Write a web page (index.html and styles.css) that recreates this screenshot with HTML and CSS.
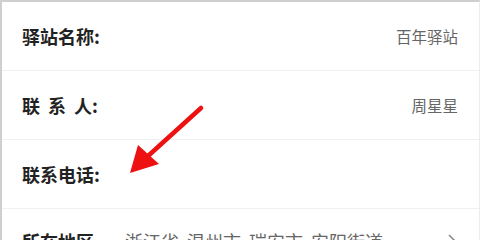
FILE: index.html
```
<!DOCTYPE html>
<html>
<head>
<meta charset="utf-8">
<link rel="stylesheet" href="styles.css">
</head>
<body>
<div class="page">
  <div class="row"><span class="label">驿站名称:</span><span class="value">百年驿站</span></div>
  <div class="row"><span class="label"><span class="sp">联</span><span class="sp">系</span>人:</span><span class="value">周星星</span></div>
  <div class="row"><span class="label">联系电话:</span></div>
  <div class="row last"><span class="label">所在地区</span><span class="addr">浙江省 温州市 瑞安市 安阳街道</span><span class="chev"><svg width="12" height="16" viewBox="0 0 12 16"><path d="M3 2 L9 8 L3 14" fill="none" stroke="#888" stroke-width="1.5"/></svg></span></div>
  <svg class="arrow" width="480" height="240" viewBox="0 0 480 240">
    <line x1="201" y1="108" x2="148" y2="156" stroke="#ee1111" stroke-width="4.5" stroke-linecap="round"/>
    <polygon points="130,173 138,145 159,164" fill="#ee1111"/>
  </svg>
</div>
</body>
</html>
```
FILE: styles.css
```
html, body {
  margin: 0;
  padding: 0;
  background: #fff;
}
.page {
  position: relative;
  width: 480px;
  height: 240px;
  box-sizing: border-box;
  border-top: 2px solid #cfcfcf;
  border-left: 2px solid #cfcfcf;
  border-right: 1px solid #ececec;
  overflow: hidden;
  font-family: "Noto Sans CJK SC", "Noto Sans", sans-serif;
}
.row {
  display: flex;
  align-items: center;
  height: 68px;
  padding: 0 21px 0 20px;
  border-bottom: 1px solid #f0f0f0;
}
.row.last {
  height: 64px;
}
.label {
  font-size: 18px;
  font-weight: bold;
  color: #222;
}
.sp {
  margin-right: 8px;
}
.value {
  margin-left: auto;
  font-size: 15.5px;
  color: #666;
}
.addr {
  margin-left: 31px;
  font-size: 18px;
  word-spacing: 4px;
  color: #666;
}
.chev {
  margin-left: auto;
  display: flex;
}
.arrow {
  position: absolute;
  left: -2px;
  top: -2px;
}
```
